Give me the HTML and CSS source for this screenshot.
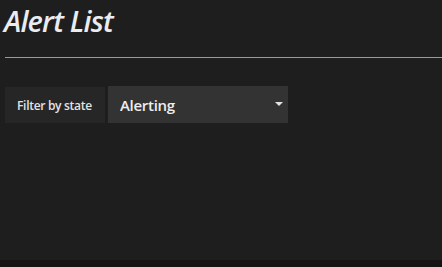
FILE: index.html
```html
<!DOCTYPE html>
<html lang="en">
<head>
  <meta charset="UTF-8" />
  <meta name="viewport" content="width=device-width, initial-scale=1.0" />
  <title>Alert List</title>
  <link rel="stylesheet" href="styles.css">
</head>
<body>
<div class="panel">
  <h1 class="panel-title">Alert List</h1>
  <hr class="divider" />
  <div class="filter-row">
    <label class="filter-label" for="stateFilter">Filter by state</label>
    <div class="select-wrap">
      <select id="stateFilter">
        <option>Alerting</option>
        <option>OK</option>
        <option>Pending</option>
        <option>No Data</option>
      </select>
      <span class="caret"></span>
    </div>
  </div>
</div>
<div class="footer"></div>
</body>
</html>
```

FILE: styles.css
```css
html, body {
  margin: 0;
  height: 100%;
}
body {
  font-family: "Open Sans", "Liberation Sans", sans-serif;
  background-color: #1f1e1f;
  color: #e9edf2;
  display: flex;
  flex-direction: column;
}
.panel {
  flex: 1;
  padding: 0 0 0 5px;
}
.panel-title {
  margin: 0;
  padding-top: 2px;
  margin-left: -1px;
  font-size: 29px;
  font-style: italic;
  font-weight: 600;
  line-height: 38px;
  letter-spacing: -0.8px;
}
.divider {
  margin: 17px 0 0;
  border: none;
  height: 1px;
  background-color: #c49a2c;
}
.filter-row {
  display: flex;
  gap: 3px;
  margin-top: 28px;
}
.filter-label {
  display: flex;
  align-items: center;
  box-sizing: border-box;
  width: 100px;
  height: 36px;
  margin-top: 1px;
  padding: 0 0 0 12px;
  background-color: #262626;
  font-size: 12px;
  font-weight: 600;
  letter-spacing: -0.3px;
  color: #e3e3e3;
}
.select-wrap {
  position: relative;
  width: 180px;
  height: 37px;
}
.select-wrap select {
  appearance: none;
  width: 100%;
  height: 100%;
  border: none;
  outline: none;
  padding: 0 0 0 12px;
  background-color: #333333;
  color: #eeeeee;
  font-family: "Open Sans", "Liberation Sans", sans-serif;
  font-size: 15px;
  font-weight: 600;
  letter-spacing: -0.3px;
}
.caret {
  position: absolute;
  right: 5px;
  top: 16px;
  width: 0;
  height: 0;
  border-left: 4px solid transparent;
  border-right: 4px solid transparent;
  border-top: 4px solid #e3e3e3;
  pointer-events: none;
}
.footer {
  height: 7px;
  background-color: #141414;
}
```
